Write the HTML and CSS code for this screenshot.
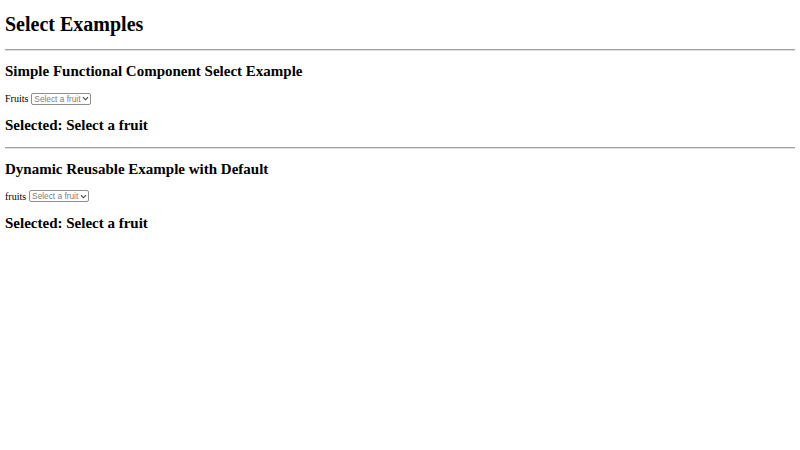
FILE: index.html
```html
<!DOCTYPE html>
<html>
<head>
<meta charset="utf-8">
<title>Select Examples</title>
<link rel="stylesheet" href="styles.css">
</head>
<body>
<h1>Select Examples</h1>
<hr>
<h2>Simple Functional Component Select Example</h2>
<div class="field">
  <label for="f1">Fruits</label>
  <span class="select">Select a fruit<svg viewBox="0 0 8 6" width="7" height="5"><path d="M1 1.5 L4 4.5 L7 1.5" fill="none" stroke="#555" stroke-width="1.3"/></svg></span>
</div>
<h2>Selected: Select a fruit</h2>
<hr>
<h2>Dynamic Reusable Example with Default</h2>
<div class="field">
  <label for="f2">fruits</label>
  <span class="select">Select a fruit<svg viewBox="0 0 8 6" width="7" height="5"><path d="M1 1.5 L4 4.5 L7 1.5" fill="none" stroke="#555" stroke-width="1.3"/></svg></span>
</div>
<h2>Selected: Select a fruit</h2>
</body>
</html>
```
FILE: styles.css
```css
html, body {
  background: #fff;
}
body {
  margin: 0;
  padding: 0 5px;
  font-family: "Liberation Serif", "Times New Roman", serif;
  font-size: 10px;
  color: #000;
}
h1 {
  font-size: 20px;
  margin: 0;
  padding-top: 13px;
  line-height: 23px;
  margin-bottom: 13px;
}
h2 {
  font-size: 15px;
  line-height: 17px;
  margin: 12.4px 0;
}
hr {
  margin: 5px 0;
  border: none;
  border-top: 1px solid #a0a0a0;
  border-bottom: 1px solid #e0e0e0;
}
.field {
  display: flex;
  align-items: center;
  gap: 3px;
  height: 12px;
}
.select {
  display: inline-flex;
  align-items: center;
  gap: 2px;
  height: 12px;
  box-sizing: border-box;
  padding: 0 1px 0 2px;
  border: 1px solid #8f8f8f;
  border-radius: 2px;
  font-family: "Liberation Sans", Arial, sans-serif;
  font-size: 8.3px;
  color: #808080;
  background: #fff;
}
.select svg {
  display: block;
}
```
